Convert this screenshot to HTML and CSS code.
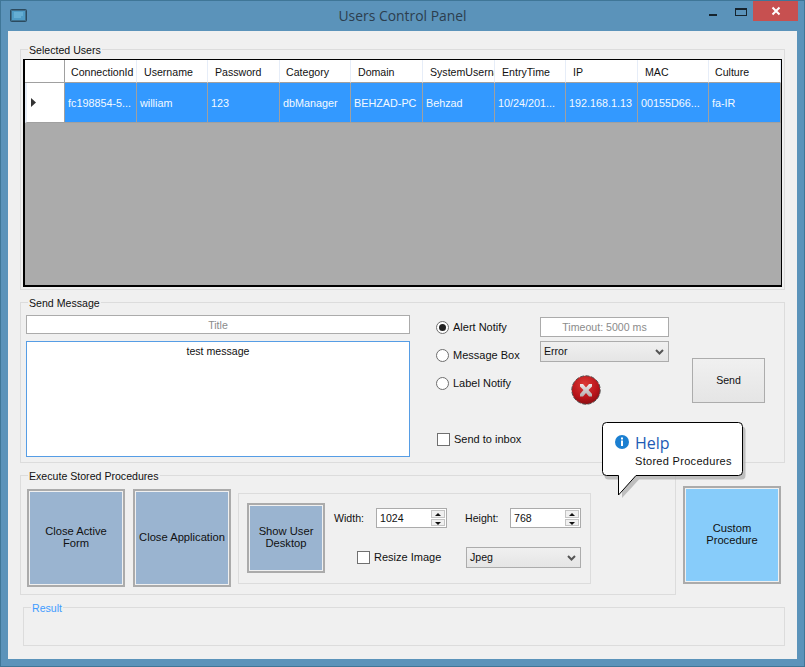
FILE: index.html
```html
<!DOCTYPE html>
<html lang="en">
<head>
<meta charset="utf-8">
<title>Users Control Panel</title>
<link rel="stylesheet" href="styles.css">
</head>
<body>
<div class="window">
  <header class="titlebar">
    <svg class="app-icon" width="17" height="13" viewBox="0 0 17 13"><rect x=".5" y=".5" width="16" height="12" rx="1" fill="#3f6f8c" stroke="#2c4a5e"/><rect x="2" y="2" width="13" height="9" fill="#4f9cc6"/><path d="M4 4h9M4 6h9M4 8h7" stroke="#7cc0e0"/></svg>
    <span class="title">Users Control Panel</span>
    <div class="controls">
      <span class="min"></span>
      <span class="max"></span>
      <span class="close"><svg width="10" height="10" viewBox="0 0 10 10"><path d="M1.5 1.5l7 7M8.5 1.5l-7 7" stroke="#fff" stroke-width="2"/></svg></span>
    </div>
  </header>

  <main class="client">
    <section class="group users">
      <span class="legend">Selected Users</span>
      <div class="grid">
        <div class="corner"></div>
        <div class="th p6">ConnectionId</div>
        <div class="th">Username</div>
        <div class="th">Password</div>
        <div class="th p6">Category</div>
        <div class="th">Domain</div>
        <div class="th">SystemUserna</div>
        <div class="th">EntryTime</div>
        <div class="th">IP</div>
        <div class="th">MAC</div>
        <div class="th p6">Culture</div>
        <div class="rowhead"><svg width="5" height="9" viewBox="0 0 5 9"><path d="M0 0l5 4.500L0 9z" fill="#333"/></svg></div>
        <div class="td">fc198854-5...</div>
        <div class="td">william</div>
        <div class="td">123</div>
        <div class="td">dbManager</div>
        <div class="td">BEHZAD-PC</div>
        <div class="td">Behzad</div>
        <div class="td">10/24/201...</div>
        <div class="td">192.168.1.13</div>
        <div class="td">00155D66...</div>
        <div class="td">fa-IR</div>
      </div>
    </section>

    <section class="group message">
      <span class="legend">Send Message</span>
      <div class="msg-left">
        <div class="field title-field">Title</div>
        <div class="textarea">test message</div>
      </div>
      <div class="msg-options">
        <label class="opt"><span class="radio on"></span>Alert Notify</label>
        <label class="opt"><span class="radio"></span>Message Box</label>
        <label class="opt"><span class="radio"></span>Label Notify</label>
        <label class="opt inbox"><span class="check"></span>Send to inbox</label>
      </div>
      <div class="msg-type">
        <div class="field timeout">Timeout: 5000 ms</div>
        <div class="select">Error<svg class="chev" width="9" height="7" viewBox="0 0 9 7"><path d="M1 1l3.500 3.500L8 1" fill="none" stroke="#555" stroke-width="2"/></svg></div>
        <svg class="err" width="30" height="30" viewBox="0 0 30 30">
          <defs>
            <radialGradient id="r" cx=".45" cy=".3" r=".8"><stop offset="0" stop-color="#dd3a36"/><stop offset=".6" stop-color="#b8141a"/><stop offset="1" stop-color="#7a0c10"/></radialGradient>
            <linearGradient id="x" x1="0" y1="0" x2="0" y2="1"><stop offset="0" stop-color="#eeeaea"/><stop offset="1" stop-color="#b4aeae"/></linearGradient>
          </defs>
          <circle cx="15" cy="15" r="14.200" fill="url(#r)" stroke="#555" stroke-dasharray="4 1.500"/>
          <path d="M9 9h3l3 3.500L18 9h3v2.500L17.500 15l3.500 4v2.500h-3L15 18l-3 3.500H9V19l3.500-4L9 11.500z" fill="url(#x)"/>
        </svg>
      </div>
      <button class="btn send">Send</button>
    </section>

    <div class="row-exec">
      <section class="group exec">
        <span class="legend">Execute Stored Procedures</span>
        <button class="tile large wrap">Close Active Form</button>
        <button class="tile large">Close Application</button>
        <div class="desktop">
          <button class="tile small">Show User Desktop</button>
          <div class="desk-opts">
            <div class="desk-row">
              <span class="lbl w">Width:</span>
              <div class="spin"><span class="val">1024</span><span class="arrows"><i class="up"></i><i class="down"></i></span></div>
              <span class="lbl h">Height:</span>
              <div class="spin"><span class="val">768</span><span class="arrows"><i class="up"></i><i class="down"></i></span></div>
            </div>
            <div class="desk-row second">
              <label class="opt resize"><span class="check"></span>Resize Image</label>
              <div class="select jpeg">Jpeg<svg class="chev" width="9" height="7" viewBox="0 0 9 7"><path d="M1 1l3.500 3.500L8 1" fill="none" stroke="#555" stroke-width="2"/></svg></div>
            </div>
          </div>
        </div>
      </section>
      <button class="tile custom wrap">Custom Procedure</button>
    </div>

    <section class="group result">
      <span class="legend blue">Result</span>
    </section>

    <div class="balloon">
      <svg class="balloon-bg" width="150" height="80" viewBox="0 0 150 80">
        <path d="M7.500 4.500h133a4 4 0 0 1 4 4v45a4 4 0 0 1-4 4H38L21 76V57.500H7.500a4 4 0 0 1-4-4v-45a4 4 0 0 1 4-4z" fill="#aaa" opacity=".7"/>
        <path d="M5.500 .5h132a4 4 0 0 1 4 4v45a4 4 0 0 1-4 4H35L17.500 73V53.500H5.500a4 4 0 0 1-4-4v-45a4 4 0 0 1 4-4z" fill="#fff" stroke="#000"/>
        <circle cx="21" cy="20" r="7" fill="#1b7fd1"/>
        <rect x="20" y="18.500" width="2" height="5.500" fill="#fff"/><rect x="20" y="15.500" width="2" height="2" fill="#fff"/>
      </svg>
      <div class="b-title">Help</div>
      <div class="b-text">Stored Procedures</div>
    </div>
  </main>
</div>
</body>
</html>
```
FILE: styles.css
```css
* { box-sizing: border-box; }
html, body { margin: 0; padding: 0; }
body { width: 805px; height: 667px; overflow: hidden; font: 10.6px/13px "Liberation Sans", Arial, sans-serif; color: #111; }

.window { width: 805px; height: 667px; background: #5b93ba; border: 1px solid #3f7697; padding: 0 7px 7px; display: flex; flex-direction: column; }

.titlebar { height: 30px; flex: none; position: relative; display: flex; align-items: flex-start; justify-content: center; }
.app-icon { position: absolute; left: 2px; top: 8px; }
.title { font: 14px/20px "Open Sans", sans-serif; color: #2c3e4e; margin-top: 5px; font-size: 13.9px; }
.controls { position: absolute; right: -1px; top: 0; display: flex; align-items: flex-start; }
.min { width: 8px; height: 2px; background: #16242e; margin-top: 13px; margin-right: 18px; }
.max { width: 12px; height: 8px; border: 1px solid #16242e; border-top-width: 2px; margin-top: 7px; margin-right: 6px; }
.close { width: 45px; height: 20px; background: #c75050; display: flex; align-items: center; justify-content: center; }

.client { flex: 1; background: #f0f0f0; position: relative; padding: 18px 12px 0; }

.group { border: 1px solid #dcdcdc; position: relative; }
.legend { position: absolute; left: 7px; top: -6px; background: #f0f0f0; padding: 0 1px; }
.legend.blue { color: #3f9bff; }

.users { height: 241px; padding: 9px 2px 0; }
.grid { width: 759px; height: 228px; border: 1px solid #000; border-width: 1px 1px 2px 2px; background: #ababab; display: grid; grid-template-columns: 40px 72px 71px 72px 71px 72px 72px 71px 72px 71px 72px; grid-template-rows: 23px 40px; }
.corner, .th { background: #fff; border-right: 1px solid #e6edf8; border-bottom: 1px solid #a0a0a0; }
.corner { border-right-color: #a0a0a0; }
.th { padding: 6px 0 0 7px; white-space: nowrap; overflow: hidden; color: #111; }
.th.p6 { padding-left: 6px; }
.rowhead { background: #fff; border-right: 1px solid #a0a0a0; border-bottom: 1px solid #a0a0a0; border-left: 2px solid #e6edf8; display: flex; align-items: center; padding-left: 4px; }
.td { background: #3399ff; color: #f4f9ff; border-right: 1px solid #a0a0a0; border-bottom: 1px solid #a0a0a0; padding: 14px 0 0 3px; white-space: nowrap; overflow: hidden; font-size: 10.8px; }

.message { height: 161px; margin-top: 12px; padding: 12px 0 0 5px; display: flex; align-items: flex-start; }
.msg-left { width: 384px; flex: none; display: flex; flex-direction: column; gap: 7px; }
.field { background: #fff; border: 1px solid #ababab; color: #8b8b8b; text-align: center; height: 19px; line-height: 19px; }
.textarea { background: #fff; border: 1px solid #569de5; height: 116px; text-align: center; padding-top: 3px; color: #111; }

.msg-options { width: 104px; flex: none; margin-left: 26px; padding-top: 6px; display: flex; flex-direction: column; gap: 15px; }
.opt { display: flex; align-items: center; gap: 4px; height: 13px; white-space: nowrap; font-size: 11px; }
.opt.inbox { margin-top: 28px; margin-left: 1px; }
.radio { width: 13px; height: 13px; border-radius: 50%; border: 1px solid #6e6e6e; background: #fff; flex: none; position: relative; }
.radio.on::after { content: ""; position: absolute; left: 2px; top: 2px; width: 7px; height: 7px; border-radius: 50%; background: #222; }
.check { width: 13px; height: 13px; border: 1px solid #707070; background: #fff; flex: none; }

.msg-type { width: 129px; flex: none; margin-top: 2px; display: flex; flex-direction: column; align-items: flex-start; }
.timeout { width: 129px; height: 20px; line-height: 18px; }
.select { position: relative; width: 129px; height: 21px; margin-top: 4px; border: 1px solid #acacac; background: linear-gradient(#f0f0f0, #e5e5e5); padding: 3px 0 0 3px; }
.chev { position: absolute; right: 4px; top: 7px; }
.err { margin: 13px 0 0 31px; }

.btn { font: inherit; color: #111; }
.send { width: 73px; height: 45px; margin: 43px 0 0 23px; border: 1px solid #acacac; background: linear-gradient(#f0f0f0, #e5e5e5); padding: 0; }

.row-exec { display: flex; margin-top: 12px; align-items: flex-start; }
.exec { width: 656px; height: 120px; padding: 13px 0 0 6px; display: flex; align-items: flex-start; }
.tile { font: inherit; font-size: 11.2px; line-height: 12px; color: #111; background: #9ab4d0; border: 2px solid #ababab; box-shadow: inset 0 0 0 1px #f0f0f0; padding: 0 1px 2px; flex: none; }
.tile.wrap { padding-left: 12px; padding-right: 12px; }
.large { width: 98px; height: 98px; margin-right: 8px; }
.desktop { width: 353px; height: 91px; border: 1px solid #dcdcdc; margin: 4px 0 0 -1px; padding: 9px 0 0 8px; display: flex; align-items: flex-start; }
.small { width: 78px; height: 70px; }
.desk-opts { margin: 5px 0 0 9px; }
.desk-row { display: flex; align-items: center; }
.desk-row.second { margin-top: 19px; padding-left: 23px; }
.lbl { flex: none; }
.lbl.w { width: 42px; }
.lbl.h { width: 45px; margin-left: 18px; }
.spin { width: 71px; height: 20px; border: 1px solid #ababab; background: #fff; display: flex; justify-content: space-between; padding: 1px; }
.val { padding: 2px 0 0 2px; color: #111; }
.arrows { width: 14px; display: flex; flex-direction: column; gap: 1px; background: #fff; }
.arrows i { flex: 1; background: #f0f0f0; border: 1px solid #c4c4c4; position: relative; }
.arrows i::after { content: ""; position: absolute; left: 3px; border-left: 3px solid transparent; border-right: 3px solid transparent; }
.arrows .up::after { top: 2px; border-bottom: 3px solid #111; }
.arrows .down::after { top: 2px; border-top: 3px solid #111; }
.resize { width: 109px; }
.jpeg { width: 115px; margin: 0; padding-top: 3px; }

.custom { width: 98px; height: 98px; margin: 11px 0 0 7px; background: #87ccfa; }

.result { height: 39px; margin: 12px 0 0 3px; width: 762px; }

.balloon { position: absolute; left: 593px; top: 391px; width: 150px; height: 80px; }
.balloon-bg { position: absolute; left: 0; top: 0; }
.b-title { position: absolute; left: 34px; top: 10px; font: 16px/22px "Open Sans", sans-serif; color: #1e5bb5; }
.b-text { position: absolute; left: 34px; top: 33px; white-space: nowrap; font-size: 11px; letter-spacing: .3px; }
```
